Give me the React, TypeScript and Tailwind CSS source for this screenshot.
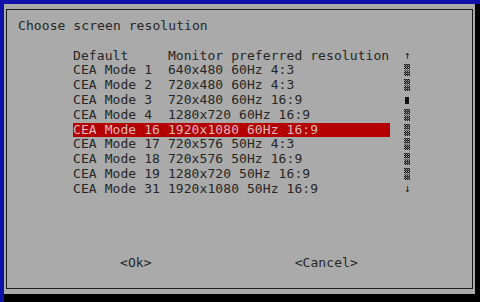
const rows: [string, string][] = [
  ["Default", "Monitor preferred resolution"],
  ["CEA Mode 1", "640x480 60Hz 4:3"],
  ["CEA Mode 2", "720x480 60Hz 4:3"],
  ["CEA Mode 3", "720x480 60Hz 16:9"],
  ["CEA Mode 4", "1280x720 60Hz 16:9"],
  ["CEA Mode 16", "1920x1080 60Hz 16:9"],
  ["CEA Mode 17", "720x576 50Hz 4:3"],
  ["CEA Mode 18", "720x576 50Hz 16:9"],
  ["CEA Mode 19", "1280x720 50Hz 16:9"],
  ["CEA Mode 31", "1920x1080 50Hz 16:9"],
];

const selected = 5;

// scrollbar cell per row
const scroll = ["up", "track", "track", "thumb", "track", "track", "track", "track", "track", "down"];

function Track() {
  return (
    <svg width="8" height="14.8" viewBox="0 0 8 14.8" className="block">
      <defs>
        <pattern id="chk" width="2" height="2" patternUnits="userSpaceOnUse">
          <rect x="0" y="0" width="1" height="1" fill="#1a1a1a" />
          <rect x="1" y="1" width="1" height="1" fill="#1a1a1a" />
          <rect x="0" y="1" width="1" height="1" fill="#555" />
        </pattern>
      </defs>
      <rect x="1" y="1" width="6" height="5.5" fill="url(#chk)" />
      <rect x="1" y="7.5" width="6" height="5.5" fill="url(#chk)" />
    </svg>
  );
}

export default function App() {
  return (
    <div className="w-[480px] h-[302px] bg-[#1010aa] pl-[4px] pt-[4px] overflow-hidden font-['DejaVu_Sans_Mono',monospace] text-[13px] leading-[14.8px] text-[#262626] tracking-[0.08px]">
      <div className="w-[471px] h-[290px] bg-[#aaaaaa] shadow-[4px_4px_0_4px_#000] pt-[5px] pl-[2px] pr-[2px] pb-[5px] flex">
        <div className="flex-1 border border-[#1c1c1c] flex flex-col pt-[9px]">
          <div className="pl-[11px] whitespace-pre">Choose screen resolution</div>
          <div className="h-[14.8px]" />

          <div className="flex">
            <div className="ml-[66px] flex flex-col">
              {rows.map(([tag, item], i) => (
                <div
                  key={tag}
                  className={`whitespace-pre pr-[1px] ${
                    i === selected ? "bg-[#b40000] text-[#dcbcbc]" : ""
                  }`}
                >
                  {tag.padEnd(11, " ") + " " + item}
                </div>
              ))}
            </div>
            <div className="ml-[13px] w-[8px] flex flex-col text-[#1c1c1c] text-[11px]">
              {scroll.map((s, i) =>
                s === "track" ? (
                  <Track key={i} />
                ) : s === "thumb" ? (
                  <div key={i} className="h-[14.8px] flex items-center justify-center">
                    <div className="w-[4px] h-[7px] bg-[#111]" />
                  </div>
                ) : (
                  <div key={i} className="h-[14.8px] flex items-center justify-center">
                    {s === "up" ? "↑" : "↓"}
                  </div>
                )
              )}
            </div>
          </div>

          <div className="mt-auto mb-[17px] flex pl-[113px] gap-[143px] whitespace-pre">
            <span>&lt;Ok&gt;</span>
            <span>&lt;Cancel&gt;</span>
          </div>
        </div>
      </div>
    </div>
  );
}
